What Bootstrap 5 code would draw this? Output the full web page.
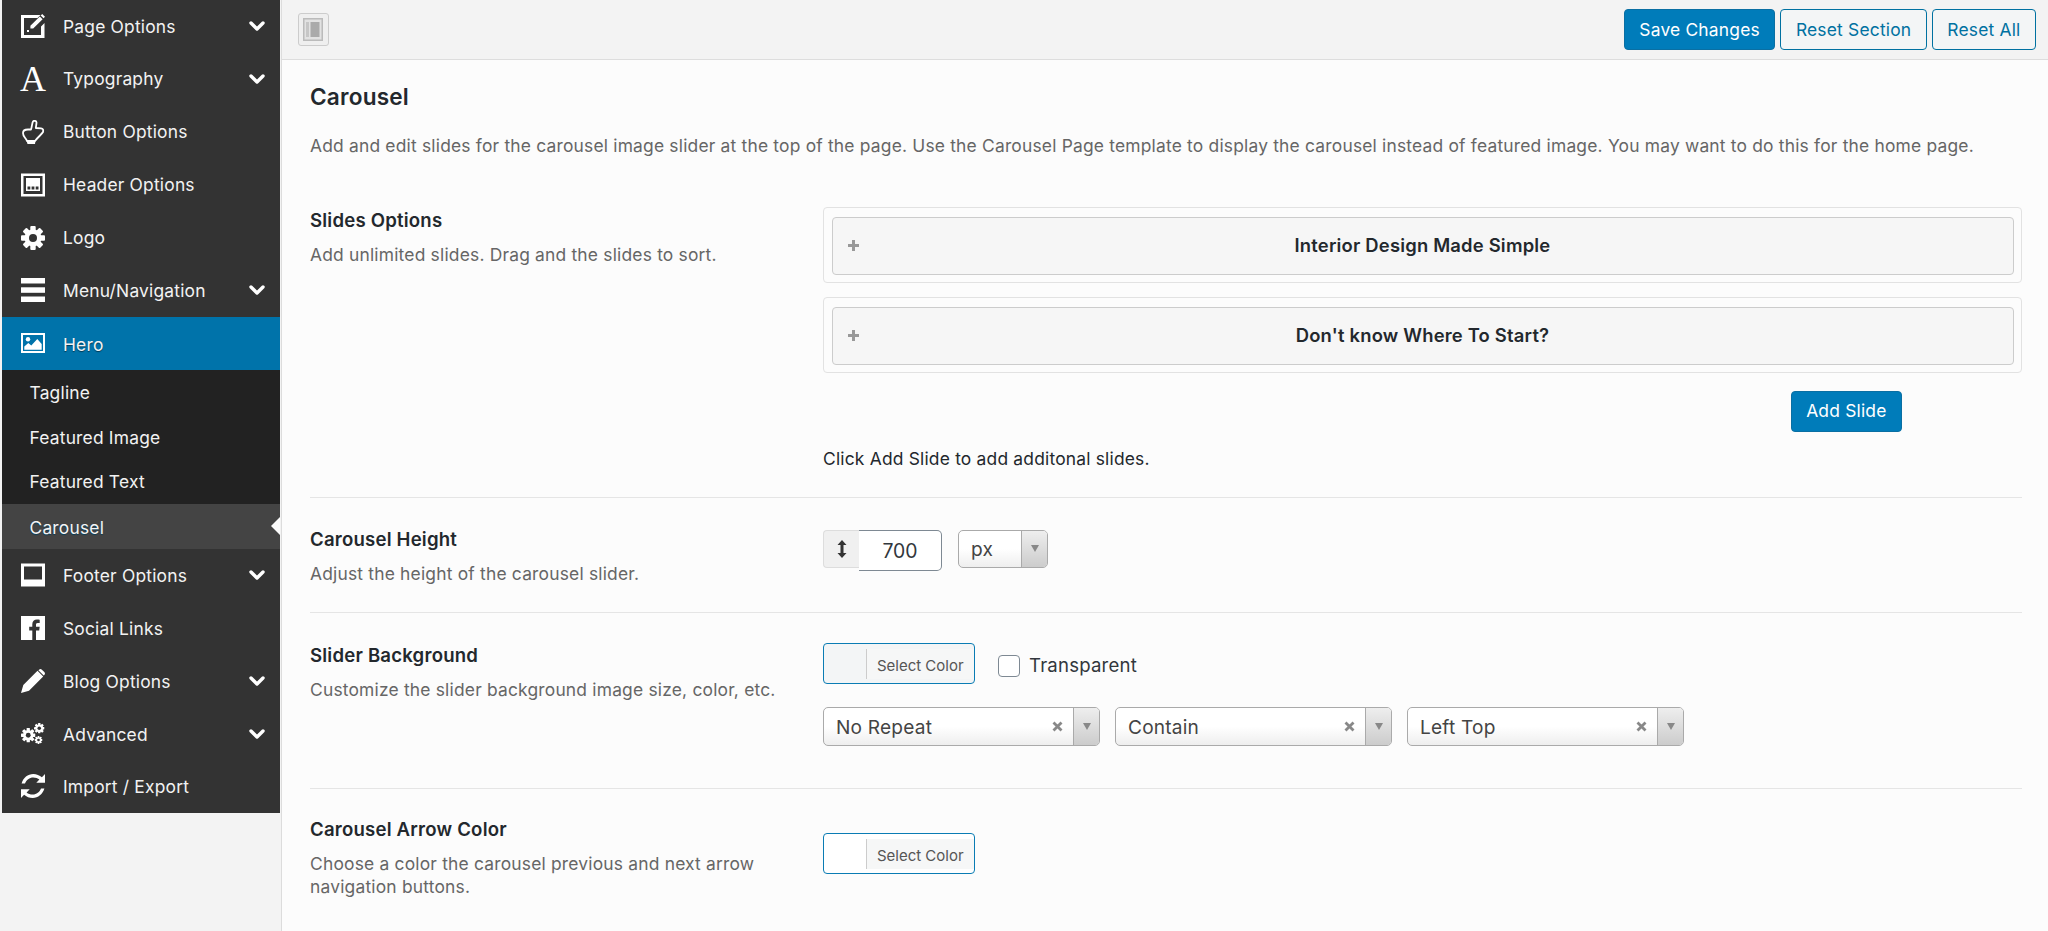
<!DOCTYPE html>
<html lang="en">
<head>
<meta charset="utf-8">
<title>Carousel options</title>
<link href="https://cdn.jsdelivr.net/npm/bootstrap@5.3.0/dist/css/bootstrap.min.css" rel="stylesheet">
<style>
html,body{height:100%;}
body{font-family:Inter,"Liberation Sans",sans-serif;font-size:17.4px;letter-spacing:.2px;background:#fcfcfc;color:#23282d;overflow:hidden;}
.shell{height:931px;}
.side-col{width:281.5px;flex:none;background:#f3f3f3;border-right:1.5px solid #dcdcdc;padding-left:1.5px;}
.side-nav{background:#333;width:278.5px;color:#fff;}
.side-item{display:flex;align-items:center;height:52.8px;padding-top:2px;color:#f2f2f2;text-decoration:none;}
.side-item:nth-child(-n+5){padding-top:.5px;}
.side-item:hover{color:#fff;}
.side-ic{width:24px;height:24px;margin:-2px 18px 0 19.5px;flex:none;display:flex;align-items:center;justify-content:center;}
.side-item:nth-child(-n+5) .side-ic{margin-top:-.5px;}
.side-ic svg{display:block;width:24px;height:24px;fill:#fff;}
.serif-ic{font-family:"Liberation Serif",serif;font-size:36px;line-height:24px;color:#fff;}
.side-chev{margin:-2px 15.5px 0 auto;width:16px;height:12px;}
.side-item:nth-child(-n+5) .side-chev{margin-top:-.5px;}
.side-item.is-open{background:#0073aa;height:53px;padding-top:3px;text-shadow:0 1px 1px rgba(0,0,0,.5);}
.side-item.is-open .side-ic{margin-top:-3px;}
.side-sub{background:#222;}
.sub-link{display:flex;align-items:center;height:44.7px;padding:2px 0 0 28px;color:#f2f2f2;text-decoration:none;position:relative;}
.sub-link.is-current{background:#444;height:45px;padding-top:3px;color:#f4f4f4;text-shadow:0 1px 1px rgba(0,60,90,.9);}
.cur-arrow{position:absolute;right:0;top:13.5px;width:0;height:0;border-top:9px solid transparent;border-bottom:9px solid transparent;border-right:9px solid #fcfcfc;}
.main-col{min-width:0;}
.top-bar{height:60px;background:#f3f3f3;border-bottom:1.5px solid #ddd;padding:0 12px 0 16px;}
.layout-btn{width:31px;height:33px;padding:0;background:#efefef;border:1px solid #ccc;border-radius:3px;display:flex;align-items:center;justify-content:center;}
.wp-btn{font-size:17.4px;letter-spacing:.2px;line-height:1;height:41px;padding:0 14.5px;border-radius:4px;--bs-btn-font-size:17.4px;}
.wp-solid{--bs-btn-bg:#007cba;--bs-btn-border-color:#0a6fa3;--bs-btn-color:#fff;--bs-btn-hover-bg:#006ba1;--bs-btn-hover-border-color:#006ba1;background:#007cba;}
.wp-line{--bs-btn-bg:#f3f5f6;--bs-btn-border-color:#0071a1;--bs-btn-color:#0071a1;--bs-btn-hover-bg:#f1f1f1;--bs-btn-hover-color:#016087;--bs-btn-hover-border-color:#016087;border-width:1.5px;}
.btn-set{gap:5px;}
.content-wrap{padding:23px 26px 0 28.5px;}
.page-ttl{font-size:22.6px;font-weight:600;line-height:28px;margin:0;color:#23282d;}
.page-desc{line-height:26px;margin:22px 0 48px;color:#666;white-space:nowrap;}
.opt-row{display:flex;}
.opt-row+.opt-row{border-top:1.5px solid #e5e5e5;padding-top:27.5px;}
.opt-label{width:513px;flex:none;}
.opt-ttl{font-size:18.6px;font-weight:600;line-height:26px;margin:0;color:#23282d;}
.opt-sub{line-height:23px;margin:10px 0 0;color:#666;}
.opt-field{flex:1;min-width:0;}
.slide-box{height:75.5px;padding:9px 7.5px 8px;border:1.5px solid #e2e2e2;border-radius:4px;margin-bottom:14.7px;}
.slide-bar{height:57.5px;background:#f6f6f6;border:1.5px solid #ccc;border-radius:4px;position:relative;font-size:18.4px;font-weight:600;color:#23282d;display:flex;align-items:center;justify-content:center;}
.slide-plus{position:absolute;left:14px;top:50%;margin-top:-6.5px;width:13px;height:13px;}
.add-wrap{margin-top:18px;padding-right:120px;}
.note-line{line-height:26px;margin:14px 0 25.5px;}
.spin-group{margin-top:4px;height:41px;}
.spin-addon{width:36px;height:38px;background:#f0f0f0;border:1px solid #ddd;border-right:0;border-radius:4px 0 0 4px;display:flex;align-items:center;justify-content:center;}
.spin-input{width:83px;height:41px;border:1.5px solid #7e8993;border-top-width:1px;border-left:0;border-radius:0 5px 5px 0;padding:1px 0 0;text-align:center;font-size:19.4px;color:#32373c;background:#fff;box-shadow:none;flex:none;}
.sel-box{height:38.5px;border:1.5px solid #aaa;border-radius:5px;background:linear-gradient(#fff 50%,#eee);display:flex;align-items:center;color:#444;position:relative;font-size:19.100px;}
.sel-text{padding:1.5px 0 0 12px;flex:1;white-space:nowrap;}
.sel-x{width:11px;height:11px;margin-right:10.5px;flex:none;}
.sel-arrow{width:26px;height:100%;flex:none;border-left:1.5px solid #aaa;border-radius:0 4px 4px 0;background:linear-gradient(#eee,#ccc);display:flex;align-items:center;justify-content:center;}
.sel-tri{width:0;height:0;border-left:4.5px solid transparent;border-right:4.5px solid transparent;border-top:7px solid #888;}
.sel-unit{width:90px;margin-left:16px;}
.sel-wide{width:277px;}
.pick-btn{width:152px;height:41px;padding:0;border:1.5px solid #0a7cb4;border-radius:4px;background:#f3f5f6;display:flex;align-items:stretch;overflow:hidden;}
.pick-swatch{width:41.5px;margin:5px 0;flex:none;}
.pick-lbl{flex:1;font-size:15px;line-height:33px;color:#555;border-left:1.5px solid #ccc;margin:4.5px 0;background:#f6f7f7;text-align:center;}
.pick-plain{background:#fff;}
.trans-check{margin-left:23px;padding-top:4px;font-size:18.6px;color:#32373c;}
.trans-check .form-check-input{width:22px;height:22px;margin:0 9px 0 0;border:1.5px solid #7e8993;border-radius:4px;float:none;}
.sel-row{margin-top:23px;gap:15px;}
.row-b{padding-bottom:27px;}
.row-c{padding-bottom:42px;padding-top:29.5px !important;}
.field-low{margin-top:1px;}
.row-d{padding-top:27.5px !important;}
.pick-low{margin-top:17px;}
</style>
</head>
<body>
<svg width="0" height="0" class="d-none">
  <defs>
    <symbol id="gear" viewBox="0 0 24 24">
      <rect x="9.300" y="0" width="5.400" height="24" rx="1"/>
      <rect x="9.300" y="0" width="5.400" height="24" rx="1" transform="rotate(45 12 12)"/>
      <rect x="9.300" y="0" width="5.400" height="24" rx="1" transform="rotate(90 12 12)"/>
      <rect x="9.300" y="0" width="5.400" height="24" rx="1" transform="rotate(135 12 12)"/>
      <circle cx="12" cy="12" r="8.500"/>
      <circle cx="12" cy="12" r="4" fill="#333"/>
    </symbol>
    <symbol id="chev" viewBox="0 0 16 12">
      <path d="M2 3l6 6 6-6" fill="none" stroke="#fff" stroke-width="3.400" stroke-linecap="round" stroke-linejoin="round"/>
    </symbol>
  </defs>
</svg>
<div class="shell d-flex">
  <aside class="side-col">
    <nav class="side-nav">
      <a class="side-item" href="#"><span class="side-ic"><svg viewBox="0 0 24 24"><path d="M0 1h19.500l-3 3H3v17h17v-8.500l3.500-3.500v15H0z"/><path d="M21.200 0L24 2.800 22.500 4.300 19.700 1.500zM18.800 2.400l2.800 2.800-9.400 9.400H9.400v-2.800z"/><path d="M6 16h2v2H6z"/></svg></span>Page Options<svg class="side-chev"><use href="#chev"/></svg></a>
      <a class="side-item" href="#"><span class="side-ic"><span class="serif-ic">A</span></span>Typography<svg class="side-chev"><use href="#chev"/></svg></a>
      <a class="side-item" href="#"><span class="side-ic"><svg viewBox="0 0 24 24"><path d="M6 21C5 18 2 17 2 13 2 10 4 9.500 7 9.500L10 9.500C11 7 11 3 12 1.500 13 .3 15.500.8 15.500 2.500 15.500 4 15 6 14.800 8L20 8.300C22 8.500 22.500 10 22 12 21 14 17 17 14 21Z" fill="none" stroke="#fff" stroke-width="1.800" stroke-linejoin="round"/><path d="M5.500 20.500h9l-.5 3.500H6.500z"/></svg></span>Button Options</a>
      <a class="side-item" href="#"><span class="side-ic"><svg viewBox="0 0 24 24"><path fill-rule="evenodd" d="M0 .5h24v23H0zM2.500 3v18h19V3z"/><path fill-rule="evenodd" d="M5 5h14v13H5zM6.500 13.500v3h2.800v-3zM10.600 13.500v3h2.800v-3zM14.700 13.500v3h2.800v-3z"/></svg></span>Header Options</a>
      <a class="side-item" href="#"><span class="side-ic"><svg viewBox="0 0 24 24"><use href="#gear"/></svg></span>Logo</a>
      <a class="side-item" href="#"><span class="side-ic"><svg viewBox="0 0 24 24"><rect y="0" width="24" height="5.500"/><rect y="9.300" width="24" height="5.500"/><rect y="18.500" width="24" height="5.500"/></svg></span>Menu/Navigation<svg class="side-chev"><use href="#chev"/></svg></a>
      <a class="side-item is-open" href="#"><span class="side-ic"><svg viewBox="0 0 24 24"><path fill-rule="evenodd" d="M0 2h24v20H0zM2 4v16h20V4z"/><circle cx="7" cy="8.300" r="2.200"/><path d="M3.300 18.700v-3.200l4-3.500 3 2.500 6-6.500 4.400 5v5.700z"/></svg></span>Hero</a>
      <div class="side-sub">
        <a class="sub-link" href="#">Tagline</a>
        <a class="sub-link" href="#">Featured Image</a>
        <a class="sub-link" href="#">Featured Text</a>
        <a class="sub-link is-current" href="#">Carousel<span class="cur-arrow"></span></a>
      </div>
      <a class="side-item" href="#"><span class="side-ic"><svg viewBox="0 0 24 24"><path fill-rule="evenodd" d="M0 .5h24v23H0zM3 3.500v13h18v-13z"/></svg></span>Footer Options<svg class="side-chev"><use href="#chev"/></svg></a>
      <a class="side-item" href="#"><span class="side-ic"><svg viewBox="0 0 24 24"><path fill-rule="evenodd" d="M0 0h24v24H0zM15 24v-9.600h3.200l.5-3.600H15V8.700c0-1 .3-1.800 1.800-1.800h1.900V3.700c-.4 0-1.500-.2-2.800-.2-2.700 0-4.600 1.700-4.600 4.700v2.600H8.200v3.600h3.100V24z"/></svg></span>Social Links</a>
      <a class="side-item" href="#"><span class="side-ic"><svg viewBox="0 0 24 24"><path d="M0 24l2.300-8L16.500 1.800 22.200 7.500 8 21.700zM18 .7c1-.9 2-.9 2.900 0l2.400 2.400c.9.900.9 1.900 0 2.900l-.6.500-5.300-5.300z"/></svg></span>Blog Options<svg class="side-chev"><use href="#chev"/></svg></a>
      <a class="side-item" href="#"><span class="side-ic"><svg viewBox="0 0 24 24"><use href="#gear" x="0" y="6" width="14.500" height="14.500"/><use href="#gear" x="13" y="1" width="10.500" height="10.500"/><use href="#gear" x="13.500" y="14" width="8" height="8"/></svg></span>Advanced<svg class="side-chev"><use href="#chev"/></svg></a>
      <a class="side-item" href="#"><span class="side-ic"><svg viewBox="0 0 24 24"><path d="M24 0v8.700h-8.700l3.100-3.100C16.900 4.200 14.600 3.400 12.300 3.400 8.400 3.400 5.400 5.800 4 9.400L.6 9.400C2.200 3.800 6.900 0 12.300 0c3.200 0 6.300 1.300 8.600 3.300zM0 24v-8.700h8.700l-3.100 3.100c1.500 1.400 3.800 2.200 6.100 2.200 3.900 0 6.900-2.400 8.300-6h3.400c-1.600 5.600-6.300 9.400-11.700 9.400-3.200 0-6.300-1.300-8.600-3.300z"/></svg></span>Import / Export</a>
    </nav>
  </aside>
  <main class="main-col flex-grow-1">
    <header class="top-bar d-flex align-items-center justify-content-between">
      <button class="layout-btn" type="button" aria-label="Toggle layout"><svg width="20" height="23" viewBox="0 0 20 23"><rect width="20" height="23" fill="#bbb"/><rect x="1.500" y="1.500" width="17" height="20" fill="#e2e2e2"/><rect x="7.500" y="4" width="9" height="15" fill="#aaa"/><rect x="3" y="4" width="3" height="15" fill="#c6c6c6"/></svg></button>
      <div class="d-flex btn-set">
        <button class="btn wp-btn wp-solid" type="button">Save Changes</button>
        <button class="btn wp-btn wp-line" type="button">Reset Section</button>
        <button class="btn wp-btn wp-line" type="button">Reset All</button>
      </div>
    </header>
    <div class="content-wrap">
      <h2 class="page-ttl">Carousel</h2>
      <p class="page-desc">Add and edit slides for the carousel image slider at the top of the page. Use the Carousel Page template to display the carousel instead of featured image. You may want to do this for the home page.</p>

      <section class="opt-row">
        <div class="opt-label">
          <h3 class="opt-ttl">Slides Options</h3>
          <p class="opt-sub">Add unlimited slides. Drag and the slides to sort.</p>
        </div>
        <div class="opt-field">
          <div class="slide-box"><div class="slide-bar"><svg class="slide-plus" viewBox="0 0 13 13"><path d="M5 1h3v4h4v3H8v4H5V8H1V5h4z" fill="#999"/></svg>Interior Design Made Simple</div></div>
          <div class="slide-box"><div class="slide-bar"><svg class="slide-plus" viewBox="0 0 13 13"><path d="M5 1h3v4h4v3H8v4H5V8H1V5h4z" fill="#999"/></svg>Don't know Where To Start?</div></div>
          <div class="add-wrap d-flex justify-content-end"><button class="btn wp-btn wp-solid" type="button">Add Slide</button></div>
          <p class="note-line">Click Add Slide to add additonal slides.</p>
        </div>
      </section>

      <section class="opt-row row-b">
        <div class="opt-label">
          <h3 class="opt-ttl">Carousel Height</h3>
          <p class="opt-sub">Adjust the height of the carousel slider.</p>
        </div>
        <div class="opt-field d-flex align-items-start">
          <div class="spin-group d-flex align-items-start">
            <span class="spin-addon"><svg width="10" height="18" viewBox="0 0 10 18"><path d="M5 0l4.500 5H6.500v8h3L5 18 .5 13h3V5h-3z" fill="#333"/></svg></span>
            <input class="form-control spin-input" type="text" value="700" aria-label="Carousel height">
          </div>
          <div class="sel-box sel-unit mt-1"><span class="sel-text">px</span><span class="sel-arrow"><span class="sel-tri"></span></span></div>
        </div>
      </section>

      <section class="opt-row row-c">
        <div class="opt-label">
          <h3 class="opt-ttl">Slider Background</h3>
          <p class="opt-sub">Customize the slider background image size, color, etc.</p>
        </div>
        <div class="opt-field">
          <div class="d-flex align-items-center field-low">
            <button class="pick-btn" type="button"><span class="pick-swatch"></span><span class="pick-lbl">Select Color</span></button>
            <label class="trans-check d-flex align-items-center"><input class="form-check-input" type="checkbox">Transparent</label>
          </div>
          <div class="sel-row d-flex">
            <div class="sel-box sel-wide"><span class="sel-text">No Repeat</span><svg class="sel-x" viewBox="0 0 11 11"><path d="M1.500 1.500l8 8M9.500 1.500l-8 8" stroke="#888" stroke-width="2.800"/></svg><span class="sel-arrow"><span class="sel-tri"></span></span></div>
            <div class="sel-box sel-wide"><span class="sel-text">Contain</span><svg class="sel-x" viewBox="0 0 11 11"><path d="M1.500 1.500l8 8M9.500 1.500l-8 8" stroke="#888" stroke-width="2.800"/></svg><span class="sel-arrow"><span class="sel-tri"></span></span></div>
            <div class="sel-box sel-wide"><span class="sel-text">Left Top</span><svg class="sel-x" viewBox="0 0 11 11"><path d="M1.500 1.500l8 8M9.500 1.500l-8 8" stroke="#888" stroke-width="2.800"/></svg><span class="sel-arrow"><span class="sel-tri"></span></span></div>
          </div>
        </div>
      </section>

      <section class="opt-row row-d">
        <div class="opt-label">
          <h3 class="opt-ttl">Carousel Arrow Color</h3>
          <p class="opt-sub">Choose a color the carousel previous and next arrow<br>navigation buttons.</p>
        </div>
        <div class="opt-field">
          <button class="pick-btn pick-plain pick-low" type="button"><span class="pick-swatch"></span><span class="pick-lbl">Select Color</span></button>
        </div>
      </section>
    </div>
  </main>
</div>
<script src="https://cdn.jsdelivr.net/npm/bootstrap@5.3.0/dist/js/bootstrap.bundle.min.js"></script>
</body>
</html>
